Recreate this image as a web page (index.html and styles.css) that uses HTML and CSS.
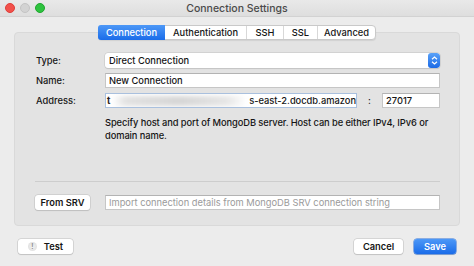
FILE: index.html
```html
<!DOCTYPE html>
<html lang="en">
<head>
    <meta charset="UTF-8">
    <title>Connection Settings</title>
    <link rel="stylesheet" href="styles.css">
</head>
<body>
    <div class="window">
        <div class="titlebar">
            <div class="lights">
                <span class="light red"></span>
                <span class="light gray"></span>
                <span class="light green"></span>
            </div>
            <div class="title">Connection Settings</div>
        </div>

        <div class="tabs">
            <span class="tab active">Connection</span>
            <span class="tab auth">Authentication</span>
            <span class="tab ssh">SSH</span>
            <span class="tab ssl">SSL</span>
            <span class="tab adv">Advanced</span>
        </div>

        <div class="panel">
            <div class="row">
                <label class="label">Type:</label>
                <div class="select">
                    <span>Direct Connection</span>
                    <span class="stepper">
                        <svg width="7" height="9" viewBox="0 0 7 9"><path d="M1 3.2 L3.5 1 L6 3.2 M1 5.8 L3.5 8 L6 5.8" fill="none" stroke="#fff" stroke-width="1.2"/></svg>
                    </span>
                </div>
            </div>
            <div class="row">
                <label class="label">Name:</label>
                <div class="field">New Connection</div>
            </div>
            <div class="row">
                <label class="label">Address:</label>
                <div class="field host"><span class="caret">t</span><span class="blur"></span><span>s-east-2.docdb.amazon</span></div>
                <span class="colon">:</span>
                <div class="field port">27017</div>
            </div>
            <p class="help">Specify host and port of MongoDB server. Host can be either IPv4, IPv6 or<br>domain name.</p>

            <div class="spacer"></div>
            <hr class="sep">

            <div class="row">
                <button class="btn srv">From SRV</button>
                <div class="field placeholder">Import connection details from MongoDB SRV connection string</div>
            </div>
        </div>

        <div class="footer">
            <button class="btn test"><span class="bang">!</span>Test</button>
            <div class="right">
                <button class="btn">Cancel</button>
                <button class="btn primary">Save</button>
            </div>
        </div>
    </div>
</body>
</html>
```

FILE: styles.css
```css
* {
    margin: 0;
    padding: 0;
    box-sizing: border-box;
}

body {
    width: 474px;
    height: 266px;
    overflow: hidden;
    background: #ececec;
    font-family: Inter, 'Liberation Sans', sans-serif;
    font-size: 9.3px;
    color: #151515;
}

.window {
    display: flex;
    flex-direction: column;
    height: 266px;
}

.titlebar {
    height: 17px;
    background: linear-gradient(#e9e9e9, #dedede);
    border-bottom: 1px solid #d2d2d2;
    display: flex;
    align-items: center;
    padding-left: 5px;
}

.lights {
    display: flex;
    gap: 5px;
    width: 0;
}

.light {
    width: 10px;
    height: 10px;
    border-radius: 50%;
    flex: none;
}

.red { background: #f2514b; border: 1px solid #df3e38; }
.gray { background: #d3d3d3; border: 1px solid #c4c4c4; }
.green { background: #2ec33f; border: 1px solid #20a62f; }

.title {
    flex: 1;
    text-align: center;
    font-size: 10.5px;
    color: #4a4a4a;
    font-weight: 500;
    margin-right: 5px;
}

.tabs {
    display: flex;
    align-self: center;
    margin-top: 8px;
    margin-bottom: -8px;
    position: relative;
    z-index: 1;
    background: #fff;
    border: 1px solid #c9c9c9;
    border-radius: 4px;
    box-shadow: 0 1px 1px rgba(0, 0, 0, 0.08);
    height: 15px;
}

.tab {
    display: flex;
    align-items: center;
    justify-content: center;
    border-left: 1px solid #d8d8d8;
    font-weight: 500;
    white-space: nowrap;
}

.tab.active {
    width: 67px;
    background: linear-gradient(#4d98f7, #1a6ce9);
    color: #fff;
    border-left: none;
    border-radius: 3px 0 0 3px;
    margin: -1px 0 -1px -1px;
}

.auth { width: 81px; border-left: none; }
.ssh { width: 37px; }
.ssl { width: 34px; }
.adv { width: 58px; }

.panel {
    margin: 0 14px;
    height: 194px;
    background: #e3e3e3;
    border: 1px solid #d9d9d9;
    border-radius: 4px;
    padding: 20px 19px 10px 21px;
    display: flex;
    flex-direction: column;
}

.row {
    display: flex;
    align-items: center;
    height: 15px;
    margin-bottom: 5px;
}

.label {
    width: 69px;
    font-weight: 500;
}

.select,
.field {
    flex: 1;
    height: 15px;
    background: #fff;
    display: flex;
    align-items: center;
    padding-left: 3px;
    white-space: nowrap;
    overflow: hidden;
}

.select {
    border-radius: 3px;
    box-shadow: 0 0 0 0.5px #c2c2c2, 0 1px 1px rgba(0, 0, 0, 0.12);
    padding-left: 4px;
    justify-content: space-between;
    font-weight: 500;
}

.stepper {
    width: 12px;
    height: 15px;
    border-radius: 3px;
    background: linear-gradient(#5aa2f8, #1b6ae6);
    display: flex;
    align-items: center;
    justify-content: center;
}

.field {
    border: 1px solid #c6c6c6;
    border-top-color: #b3b3b3;
    font-weight: 500;
}

.host {
    flex: none;
    width: 252px;
    border-color: #a9c0de;
    padding-left: 1px;
}

.caret {
    font-weight: 700;
}

.blur {
    flex: 1;
    height: 10px;
    margin: 0 2px;
    background: linear-gradient(90deg, #fff, #e2e2e2 10%, #d6d6d6 50%, #e6e6e6 85%, #fff);
    filter: blur(2px);
}

.colon {
    width: 25px;
    text-align: center;
    font-weight: 500;
}

.port {
    flex: none;
    width: 58px;
}

.help {
    margin-left: 69px;
    margin-top: 4px;
    line-height: 12.5px;
    font-weight: 500;
    letter-spacing: -0.08px;
    white-space: nowrap;
}

.spacer {
    flex: 1;
}

.sep {
    border: none;
    border-top: 1px solid #cdcdcd;
    margin: 0 0 13px -1px;
}

.btn {
    font-family: inherit;
    font-size: 9.3px;
    font-weight: 600;
    color: #151515;
    background: #fff;
    border: none;
    border-radius: 3px;
    box-shadow: 0 0 0 0.5px #bdbdbd, 0 1px 1px rgba(0, 0, 0, 0.15);
    height: 15px;
    padding: 0;
    white-space: nowrap;
    display: flex;
    align-items: center;
    justify-content: center;
}

.srv {
    width: 55px;
    margin-left: -1px;
    margin-right: 15px;
    flex: none;
}

.placeholder {
    color: #9a9a9a;
    font-weight: 400;
}

.footer {
    display: flex;
    justify-content: space-between;
    align-items: center;
    padding: 13px 18px 0 18px;
}

.test {
    width: 55px;
    gap: 7px;
}

.bang {
    width: 9px;
    height: 9px;
    border-radius: 50%;
    background: radial-gradient(#f4f4f4, #d9d9d9);
    color: #8a8a8a;
    font-size: 7px;
    display: flex;
    align-items: center;
    justify-content: center;
}

.right {
    display: flex;
    gap: 11px;
}

.right .btn { width: 49px; }

.right .primary {
    width: 42px;
    background: linear-gradient(#4d98f7, #1a6ce9);
    color: #fff;
    box-shadow: 0 0 0 0.5px #2a6fd8, 0 1px 1px rgba(0, 0, 0, 0.15);
}
```
